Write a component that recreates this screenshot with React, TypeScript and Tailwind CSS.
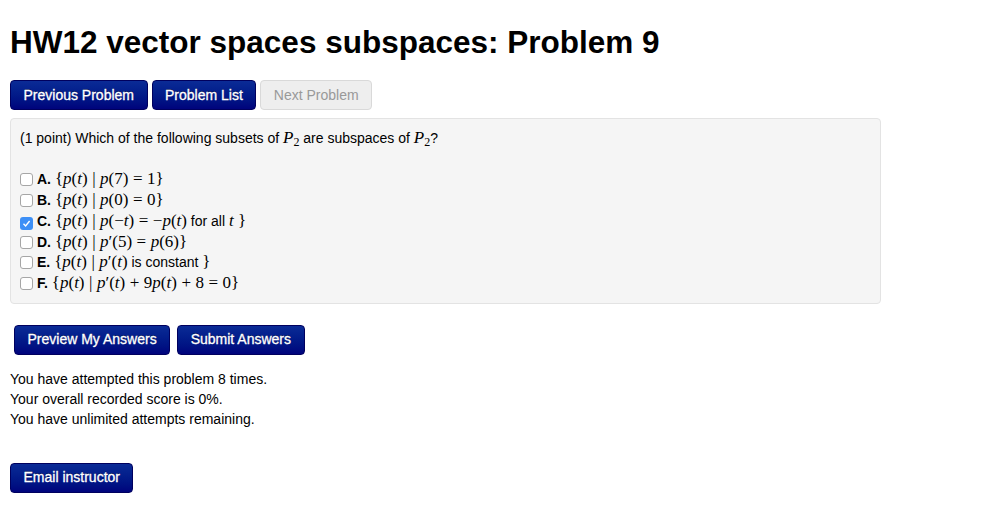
import type { ReactNode } from 'react'

function NavButton({ children, disabled }: { children: ReactNode; disabled?: boolean }) {
  if (disabled) {
    return (
      <button
        type="button"
        className="h-[30px] px-[12.5px] rounded-[4px] border border-[#d9d9d9] bg-[#eeeeee] text-[14px] text-[#999999]"
      >
        {children}
      </button>
    )
  }
  return (
    <button
      type="button"
      className="h-[30px] px-[12.5px] rounded-[4px] border border-[#00005e] bg-gradient-to-b from-[#0b2b96] to-[#00037c] text-[14px] text-white [text-shadow:0_-1px_0_rgba(0,0,0,0.4)] [-webkit-text-stroke:0.3px_white]"
    >
      {children}
    </button>
  )
}

// italic variable
function V({ children }: { children: ReactNode }) {
  return <i className="italic">{children}</i>
}

// relation / binary operator with math spacing
function Op({ children }: { children: ReactNode }) {
  return <span className="mx-[4.5px]">{children}</span>
}

function M({ children }: { children: ReactNode }) {
  return <span className="font-['Liberation_Serif',serif] text-[17px] leading-none not-italic">{children}</span>
}

function P2() {
  return (
    <M>
      <V>P</V>
      <span className="relative top-[3px] text-[12px]">2</span>
    </M>
  )
}

function Box({ checked }: { checked?: boolean }) {
  if (checked) {
    return (
      <span className="inline-flex w-[13px] h-[13px] mr-[4px] rounded-[3px] bg-[#3d8ff6] items-center justify-center align-[-2px]">
        <svg width="9" height="9" viewBox="0 0 9 9">
          <path d="M1.5 4.8 L3.6 6.9 L7.6 2" fill="none" stroke="white" strokeWidth="1.4" />
        </svg>
      </span>
    )
  }
  return (
    <span className="inline-block w-[13px] h-[13px] mr-[4px] rounded-[3px] border border-[#a6a6a6] bg-white align-[-2px]" />
  )
}

const pt = (
  <>
    <V>p</V>(<V>t</V>)
  </>
)

export default function App() {
  return (
    <div className="min-h-[511px] bg-white text-black font-['Liberation_Sans',Arial,sans-serif] px-[10px] pt-[24px] pb-[18px]">
      <h1 className="text-[31.5px] font-bold leading-[36px]">HW12 vector spaces subspaces: Problem 9</h1>

      <div className="flex gap-[4px] mt-[20px]">
        <NavButton>Previous Problem</NavButton>
        <NavButton>Problem List</NavButton>
        <NavButton disabled>Next Problem</NavButton>
      </div>

      <div className="mt-[8px] w-[871px] rounded-[4px] border border-[#e3e3e3] bg-[#f5f5f5] px-[9px] py-[9px] text-[14px] leading-[20.7px]">
        <div>
          (1 point) Which of the following subsets of <P2 /> are subspaces of <P2 />?
        </div>
        <div className="h-[20.7px]" />
        <div>
          <Box />
          <b>A.</b>{' '}
          <M>
            {'{'}
            {pt}
            <Op>|</Op>
            <V>p</V>(7)<Op>=</Op>1{'}'}
          </M>
        </div>
        <div>
          <Box />
          <b>B.</b>{' '}
          <M>
            {'{'}
            {pt}
            <Op>|</Op>
            <V>p</V>(0)<Op>=</Op>0{'}'}
          </M>
        </div>
        <div>
          <Box checked />
          <b>C.</b>{' '}
          <M>
            {'{'}
            {pt}
            <Op>|</Op>
            <V>p</V>(−<V>t</V>)<Op>=</Op>−{pt}
          </M>{' '}
          for all{' '}
          <M>
            <V>t</V>
            {' }'}
          </M>
        </div>
        <div>
          <Box />
          <b>D.</b>{' '}
          <M>
            {'{'}
            {pt}
            <Op>|</Op>
            <V>p</V>′(5)<Op>=</Op>
            <V>p</V>(6){'}'}
          </M>
        </div>
        <div>
          <Box />
          <b>E.</b>{' '}
          <M>
            {'{'}
            {pt}
            <Op>|</Op>
            <V>p</V>′(<V>t</V>)
          </M>{' '}
          is constant{' '}
          <M>{'}'}</M>
        </div>
        <div>
          <Box />
          <b>F.</b>{' '}
          <M>
            {'{'}
            {pt}
            <Op>|</Op>
            <V>p</V>′(<V>t</V>)<Op>+</Op>9{pt}
            <Op>+</Op>8<Op>=</Op>0{'}'}
          </M>
        </div>
      </div>

      <div className="flex gap-[7px] mt-[21px] ml-[4px]">
        <NavButton>Preview My Answers</NavButton>
        <NavButton>Submit Answers</NavButton>
      </div>

      <div className="mt-[14px] text-[14px] leading-[20px]">
        <p>You have attempted this problem 8 times.</p>
        <p>Your overall recorded score is 0%.</p>
        <p>You have unlimited attempts remaining.</p>
      </div>

      <div className="mt-[34px]">
        <NavButton>Email instructor</NavButton>
      </div>
    </div>
  )
}
